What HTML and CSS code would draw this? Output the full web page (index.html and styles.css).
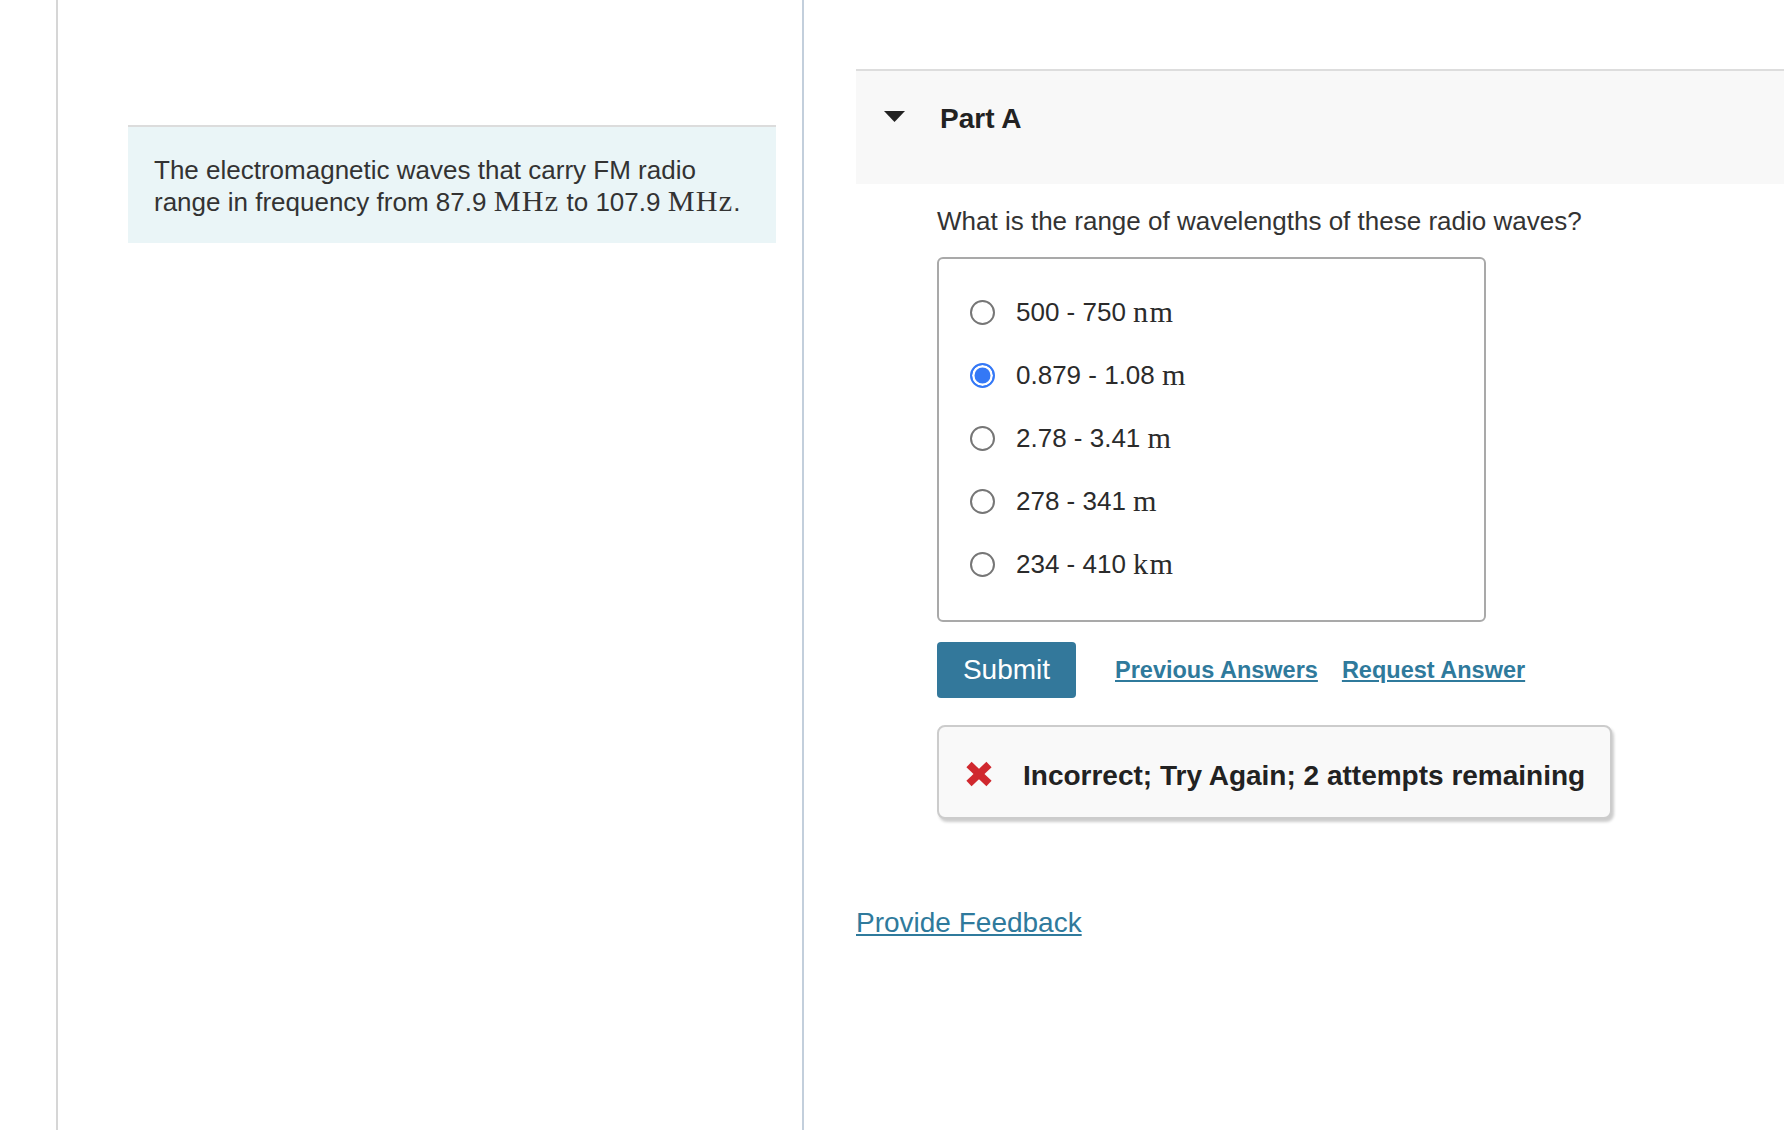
FILE: index.html
```html
<!DOCTYPE html>
<html lang="en">
<head>
  <meta charset="UTF-8" />
  <meta name="viewport" content="width=device-width, initial-scale=1.0"/>
  <title>Part A</title>
  <link rel="stylesheet" href="styles.css">
</head>
<body>
  <div class="page">
    <div class="intro-col">
      <div class="intro-box">
        The electromagnetic waves that carry FM radio<br>range in frequency from 87.9 <span class="math">MHz</span> to 107.9 <span class="math">MHz</span>.
      </div>
    </div>

    <div class="part-col">
      <div class="part">
        <div class="part-head">
          <svg class="caret" width="21" height="11" viewBox="0 0 21 11"><polygon points="0,0 21,0 10.5,11" fill="#222"/></svg>
          <h2>Part A</h2>
        </div>

        <div class="part-body">
          <p class="question">What is the range of wavelengths of these radio waves?</p>

          <div class="choices">
            <label class="choice"><span class="radio"></span>500 - 750 <span class="math">nm</span></label>
            <label class="choice"><span class="radio checked"></span>0.879 - 1.08 <span class="math">m</span></label>
            <label class="choice"><span class="radio"></span>2.78 - 3.41 <span class="math">m</span></label>
            <label class="choice"><span class="radio"></span>278 - 341 <span class="math">m</span></label>
            <label class="choice"><span class="radio"></span>234 - 410 <span class="math">km</span></label>
          </div>

          <div class="actions">
            <button class="submit">Submit</button>
            <a href="#" class="action-link">Previous Answers</a>
            <a href="#" class="action-link">Request Answer</a>
          </div>

          <div class="feedback">
            <svg class="x-icon" width="28" height="26" viewBox="0 0 28 26">
              <line x1="4" y1="3.5" x2="24" y2="22.5" stroke="#d0282e" stroke-width="7.5"/>
              <line x1="24" y1="3.5" x2="4" y2="22.5" stroke="#d0282e" stroke-width="7.5"/>
            </svg>
            <span class="feedback-text">Incorrect; Try Again; 2 attempts remaining</span>
          </div>
        </div>
      </div>

      <a href="#" class="provide-feedback">Provide Feedback</a>
    </div>
  </div>
</body>
</html>
```

FILE: styles.css
```css
body {
  margin: 0;
  padding: 0;
  font-family: 'Liberation Sans', Arial, sans-serif;
  background: #fff;
  color: #2b2b2b;
}

.page {
  display: flex;
  min-height: 100vh;
  margin-left: 56px;
  border-left: 2px solid #d6d6d6;
}

.intro-col {
  width: 746px;
  box-sizing: border-box;
  padding: 125px 26px 0 70px;
  border-right: 2px solid #c3cfdc;
}

.intro-box {
  background: #eaf5f7;
  border-top: 2px solid #dcdcdc;
  padding: 27px 26px 25px;
  font-size: 26px;
  line-height: 32px;
  color: #333;
}

.math {
  font-family: 'Liberation Serif', 'Times New Roman', serif;
  font-size: 1.16em;
  letter-spacing: 0.04em;
  line-height: 1;
}

.part-col {
  flex: 1;
  padding: 69px 0 0 52px;
}

.part-head {
  display: flex;
  align-items: flex-start;
  background: #f8f8f8;
  border-top: 2px solid #dddddd;
  padding: 32px 0 49px 28px;
}

.caret {
  margin-top: 8px;
  margin-right: 35px;
}

.part-head h2 {
  margin: 0;
  font-size: 28px;
  line-height: 32px;
  font-weight: bold;
  color: #222;
}

.part-body {
  padding-left: 81px;
}

.question {
  margin: 21px 0 20px;
  font-size: 26px;
  line-height: 32px;
  color: #333;
}

.choices {
  width: 549px;
  box-sizing: border-box;
  border: 2px solid #a9a9a9;
  border-radius: 6px;
  padding: 22px 0 24px 31px;
}

.choice {
  display: flex;
  align-items: center;
  height: 63px;
  font-size: 26px;
  color: #2b2b2b;
  white-space: pre;
  cursor: pointer;
}

.radio {
  width: 25px;
  height: 25px;
  box-sizing: border-box;
  border: 2px solid #767676;
  border-radius: 50%;
  background: #fff;
  margin-right: 21px;
  flex-shrink: 0;
}

.radio.checked {
  border: 2.5px solid #3478f6;
  background: #3478f6;
  box-shadow: inset 0 0 0 2.5px #fff;
}

.actions {
  display: flex;
  align-items: center;
  margin-top: 20px;
}

.submit {
  width: 139px;
  height: 56px;
  background: #33789b;
  color: #fff;
  border: none;
  border-radius: 4px;
  font-family: 'Liberation Sans', Arial, sans-serif;
  font-size: 28px;
  padding: 0;
  margin-right: 39px;
  cursor: pointer;
}

.action-link {
  font-size: 23.5px;
  font-weight: bold;
  color: #2f7a9c;
  margin-right: 24px;
}

.feedback {
  display: flex;
  align-items: center;
  width: 675px;
  height: 94px;
  box-sizing: border-box;
  margin-top: 27px;
  padding: 3px 0 0 26px;
  background: #f9f9f9;
  border: 2px solid #cccccc;
  border-radius: 8px;
  box-shadow: 2px 3px 3px rgba(0, 0, 0, 0.2);
  font-size: 28px;
  font-weight: bold;
  color: #222;
}

.x-icon {
  margin-right: 30px;
}

.feedback-text {
  margin-top: 4px;
}

.provide-feedback {
  display: inline-block;
  margin-top: 88px;
  font-size: 28px;
  line-height: 32px;
  color: #2f7a9c;
}
```
